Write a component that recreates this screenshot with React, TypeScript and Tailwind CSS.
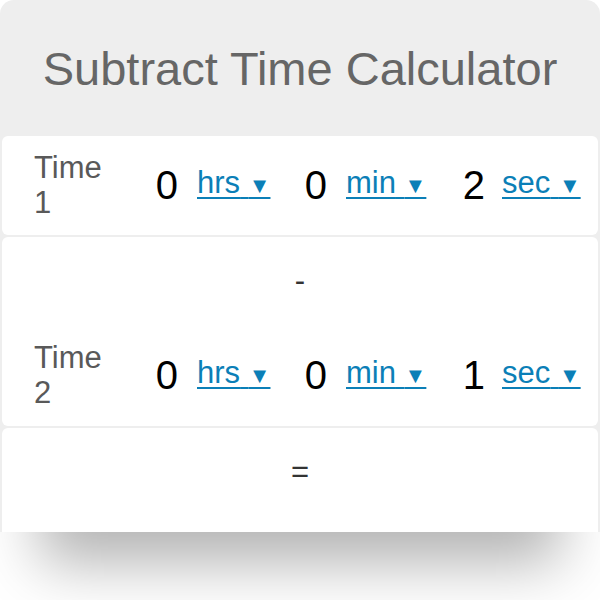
import React from "react";

type FieldProps = {
  value: string;
  unit: string;
  numClass: string;
  unitClass: string;
};

// Number input followed by its unit dropdown link
function Field({ value, unit, numClass, unitClass }: FieldProps) {
  return (
    <>
      <div className={`${numClass} text-right text-[40px] leading-none text-black`}>
        {value}
      </div>
      <div className={`${unitClass} whitespace-nowrap leading-none`}>
        <span className="relative -top-[3px] text-[31px] text-[#0b7fb7] underline decoration-[2px] underline-offset-[4px]">
          {unit}
          {"\u00a0"}
          <span className="text-[22px]">▼</span>
        </span>
      </div>
    </>
  );
}

function TimeRow({ label, h, m, s }: { label: string; h: string; m: string; s: string }) {
  return (
    <div className="flex h-[100px] items-center pl-[32px]">
      <div className="w-[106px] text-[31px] leading-[35px] text-[#595959]">
        <div>Time</div>
        <div>{label}</div>
      </div>
      <Field value={h} unit="hrs" numClass="w-[38px] mr-[19px]" unitClass="w-[93px]" />
      <Field value={m} unit="min" numClass="w-[37px] mr-[19px]" unitClass="w-[104px]" />
      <Field value={s} unit="sec" numClass="w-[35px] mr-[17px]" unitClass="w-[80px]" />
    </div>
  );
}

export default function App() {
  return (
    <div className="h-[600px] w-[600px] bg-white font-['Liberation_Sans',Arial,sans-serif]">
      <div className="flex h-[532px] flex-col overflow-hidden rounded-t-[14px] bg-[#eeeeee] shadow-[0_71px_56px_-40px_rgba(0,0,0,0.3)]">
        <div className="flex h-[136px] shrink-0 items-center justify-center text-[47px] leading-none text-[#666666]">
          Subtract Time Calculator
        </div>
        <div className="flex flex-col gap-[2px] px-[2px]">
          <div className="h-[99px] overflow-hidden rounded-[6px] bg-white">
            <div className="-mt-[1px]">
              <TimeRow label="1" h="0" m="0" s="2" />
            </div>
          </div>
          <div className="h-[189px] rounded-[6px] bg-white">
            <div className="flex h-[88px] items-center justify-center text-[31px] text-[#333333]">
              -
            </div>
            <TimeRow label="2" h="0" m="0" s="1" />
          </div>
          <div className="h-[140px] rounded-[6px] bg-white">
            <div className="flex h-[88px] items-center justify-center text-[31px] text-[#333333]">
              =
            </div>
          </div>
        </div>
      </div>
    </div>
  );
}
